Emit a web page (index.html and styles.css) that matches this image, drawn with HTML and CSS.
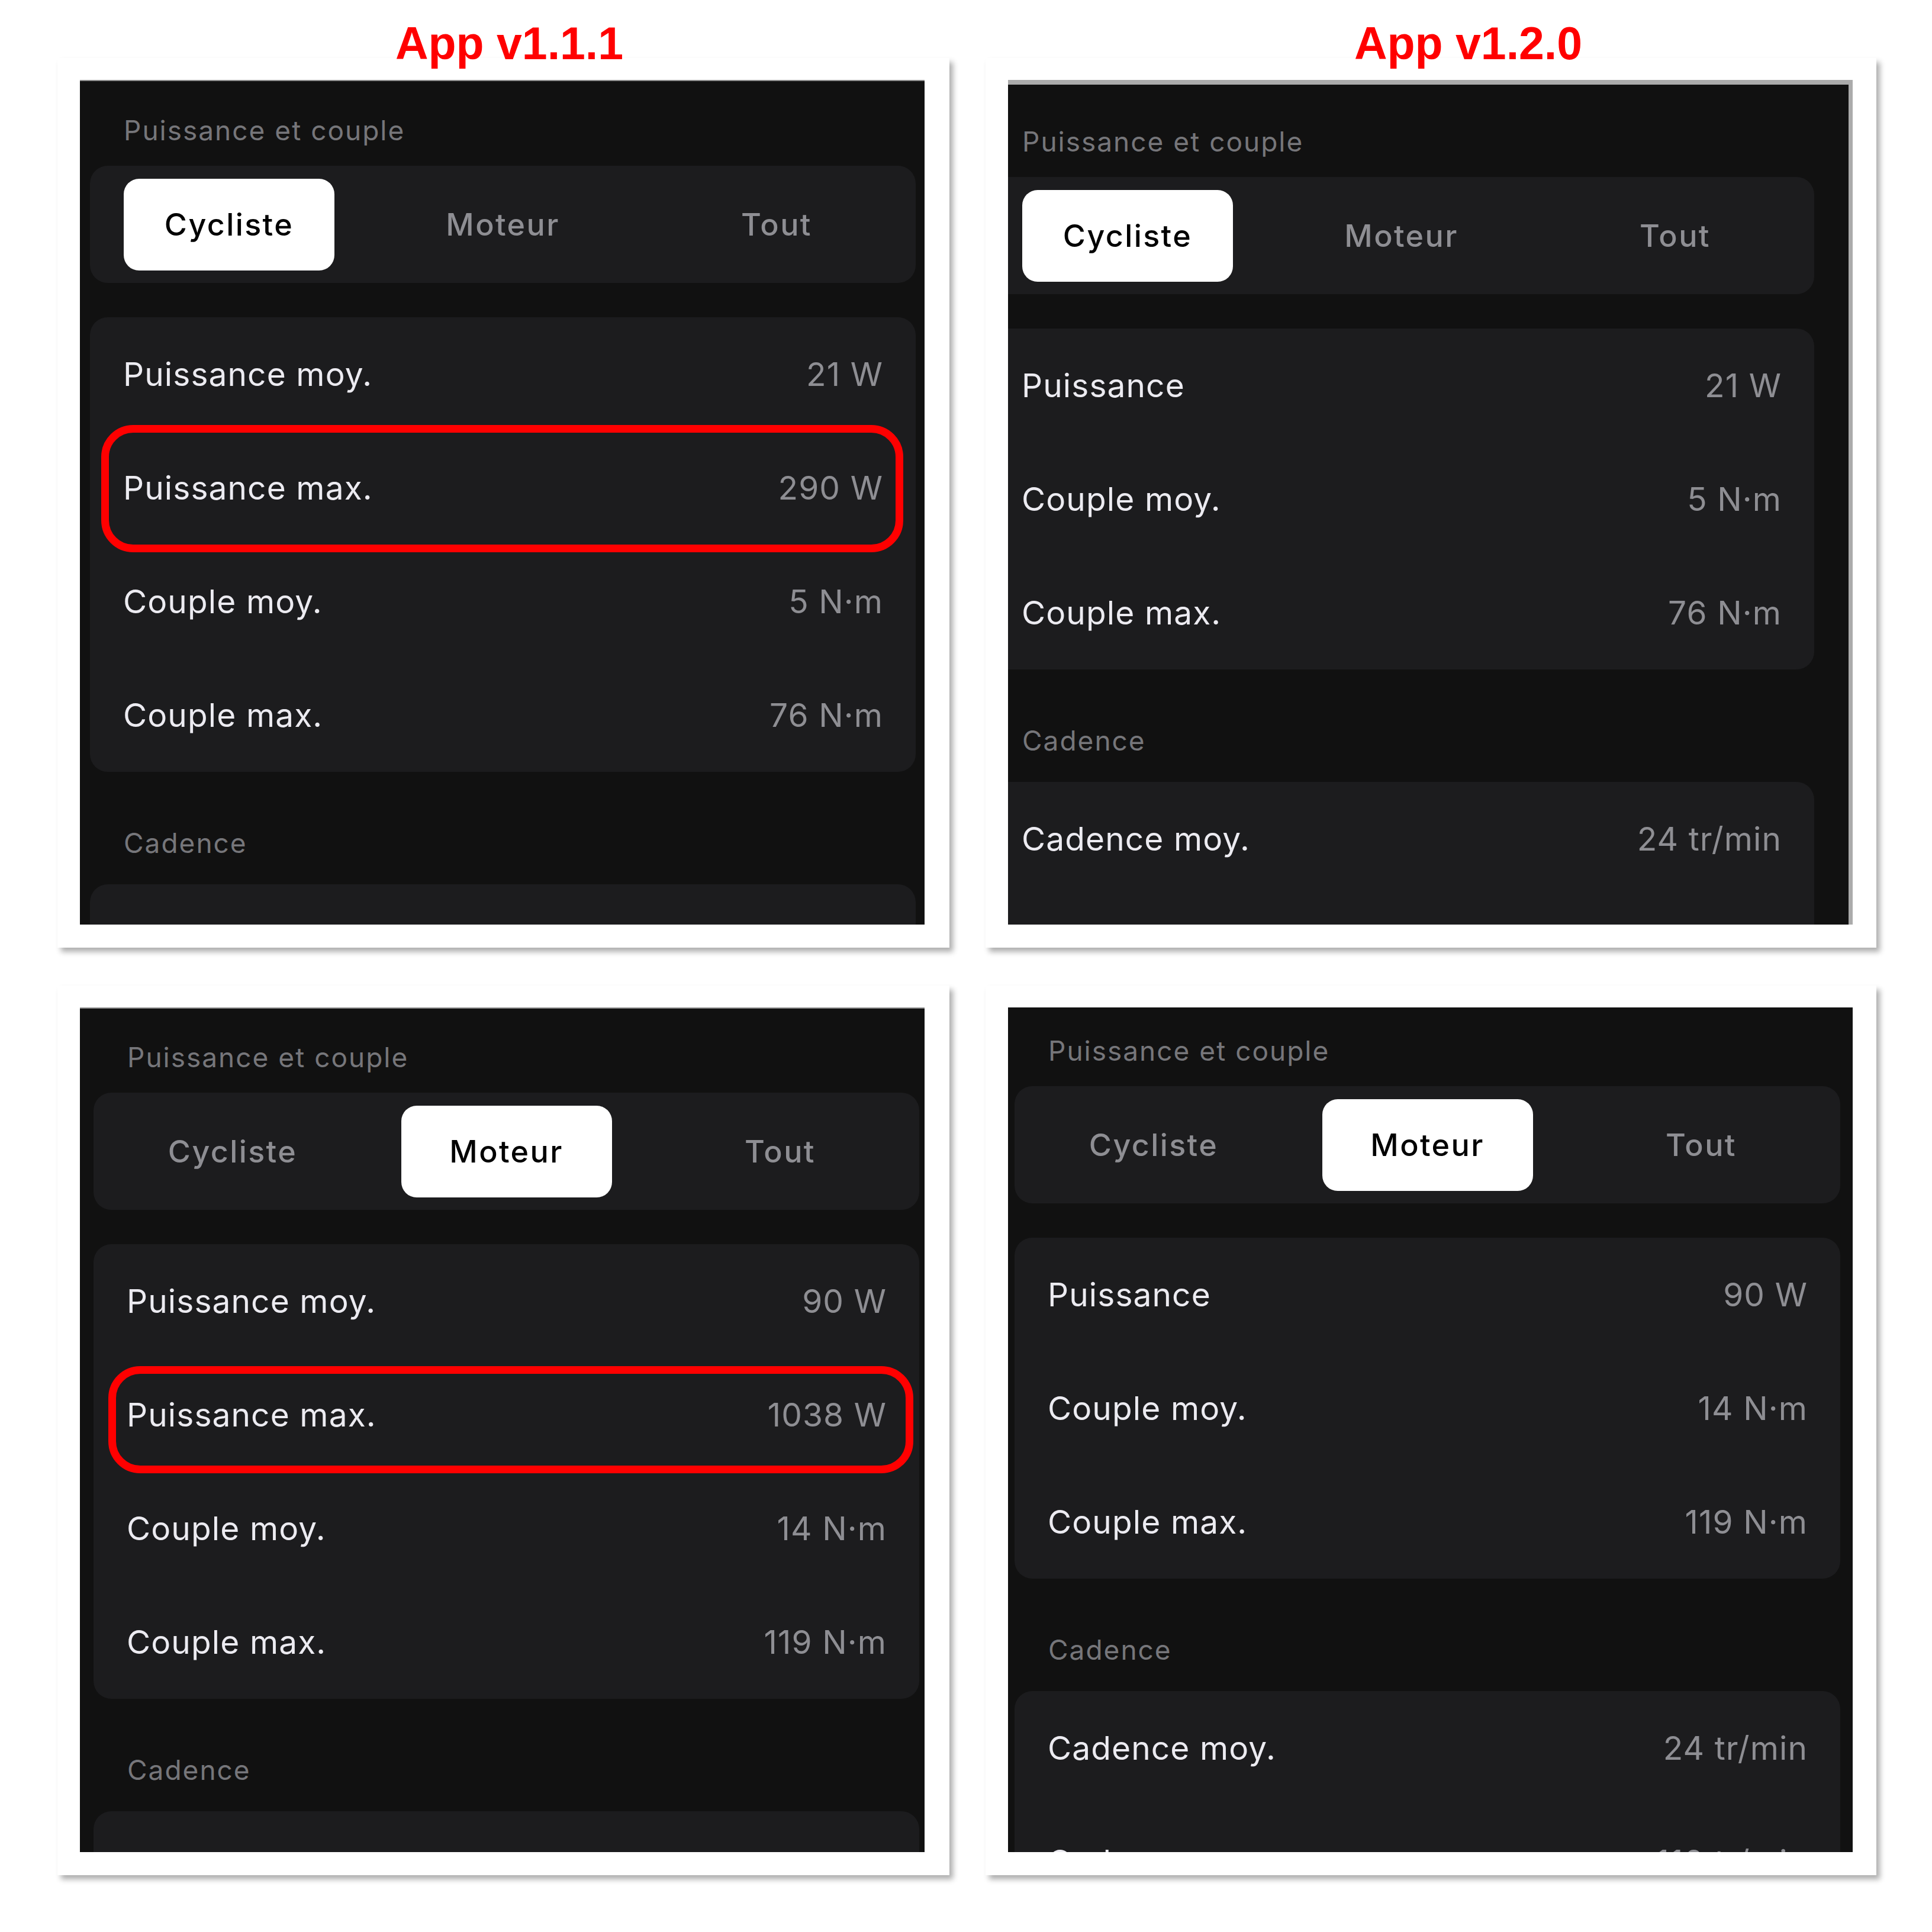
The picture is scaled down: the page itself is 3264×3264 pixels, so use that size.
FILE: index.html
```html
<!DOCTYPE html>
<html lang="fr">
<head>
<meta charset="utf-8">
<title>Comparaison App v1.1.1 / v1.2.0</title>
<link rel="stylesheet" href="styles.css">
</head>
<body>
<div class="page">
  <div class="titles">
    <h1 class="title title--left">App v1.1.1</h1>
    <h1 class="title title--right">App v1.2.0</h1>
  </div>
  <div class="grid">
    <!-- Top left: v1.1.1 Cycliste -->
    <div class="card">
      <div class="screen screen--line">
        <div class="content content--tl">
          <div class="section-title">Puissance et couple</div>
          <div class="seg">
            <div class="seg-item is-active">Cycliste</div>
            <div class="seg-item">Moteur</div>
            <div class="seg-item">Tout</div>
          </div>
          <div class="list">
            <div class="row"><span class="label">Puissance moy.</span><span class="value">21 W</span></div>
            <div class="row is-flagged"><span class="label">Puissance max.</span><span class="value">290 W</span></div>
            <div class="row"><span class="label">Couple moy.</span><span class="value">5 N·m</span></div>
            <div class="row"><span class="label">Couple max.</span><span class="value">76 N·m</span></div>
          </div>
          <div class="section-title section-title--next">Cadence</div>
          <div class="list list--stub"></div>
        </div>
      </div>
    </div>
    <!-- Top right: v1.2.0 Cycliste -->
    <div class="card">
      <div class="screen screen--framed">
        <div class="content content--tr">
          <div class="section-title">Puissance et couple</div>
          <div class="seg">
            <div class="seg-item is-active">Cycliste</div>
            <div class="seg-item">Moteur</div>
            <div class="seg-item">Tout</div>
          </div>
          <div class="list">
            <div class="row"><span class="label">Puissance</span><span class="value">21 W</span></div>
            <div class="row"><span class="label">Couple moy.</span><span class="value">5 N·m</span></div>
            <div class="row"><span class="label">Couple max.</span><span class="value">76 N·m</span></div>
          </div>
          <div class="section-title section-title--next">Cadence</div>
          <div class="list list--open">
            <div class="row"><span class="label">Cadence moy.</span><span class="value">24 tr/min</span></div>
          </div>
        </div>
      </div>
    </div>
    <!-- Bottom left: v1.1.1 Moteur -->
    <div class="card">
      <div class="screen screen--line">
        <div class="content content--bl">
          <div class="section-title">Puissance et couple</div>
          <div class="seg">
            <div class="seg-item">Cycliste</div>
            <div class="seg-item is-active">Moteur</div>
            <div class="seg-item">Tout</div>
          </div>
          <div class="list">
            <div class="row"><span class="label">Puissance moy.</span><span class="value">90 W</span></div>
            <div class="row is-flagged is-flagged--alt"><span class="label">Puissance max.</span><span class="value">1038 W</span></div>
            <div class="row"><span class="label">Couple moy.</span><span class="value">14 N·m</span></div>
            <div class="row"><span class="label">Couple max.</span><span class="value">119 N·m</span></div>
          </div>
          <div class="section-title section-title--next">Cadence</div>
          <div class="list list--stub"></div>
        </div>
      </div>
    </div>
    <!-- Bottom right: v1.2.0 Moteur -->
    <div class="card">
      <div class="screen">
        <div class="content content--br">
          <div class="section-title">Puissance et couple</div>
          <div class="seg">
            <div class="seg-item">Cycliste</div>
            <div class="seg-item is-active">Moteur</div>
            <div class="seg-item">Tout</div>
          </div>
          <div class="list">
            <div class="row"><span class="label">Puissance</span><span class="value">90 W</span></div>
            <div class="row"><span class="label">Couple moy.</span><span class="value">14 N·m</span></div>
            <div class="row"><span class="label">Couple max.</span><span class="value">119 N·m</span></div>
          </div>
          <div class="section-title section-title--next">Cadence</div>
          <div class="list">
            <div class="row"><span class="label">Cadence moy.</span><span class="value">24 tr/min</span></div>
            <div class="row"><span class="label">Cadence max.</span><span class="value">110 tr/min</span></div>
          </div>
        </div>
      </div>
    </div>
  </div>
</div>
</body>
</html>
```
FILE: styles.css
```css
* {
  box-sizing: border-box;
}

html, body {
  margin: 0;
  padding: 0;
  background: #ffffff;
}

body {
  font-family: Inter, "Noto Sans", "DejaVu Sans", sans-serif;
}

.page {
  width: 3264px;
  height: 3264px;
  padding: 48px 0 0 97px;
  overflow: hidden;
}

.titles,
.grid {
  display: grid;
  grid-template-columns: 1507px 1505px;
  column-gap: 61px;
}

.titles {
  position: relative;
  z-index: 1;
}

.grid {
  row-gap: 64px;
}

.title {
  margin: 0;
  height: 50px;
  line-height: 50px;
  text-align: center;
  font-family: "Liberation Sans", Arial, sans-serif;
  font-weight: 700;
  font-size: 77px;
  color: #ff0000;
  white-space: nowrap;
}

.title--left {
  padding-left: 20px;
}

.title--right {
  padding-left: 126px;
}

.card {
  background: #ffffff;
  padding: 37px 42px 39px 38px;
  box-shadow: 6px 7px 9px rgba(0, 0, 0, 0.32);
}

.screen {
  width: 1427px;
  height: 1427px;
  background: #111111;
  overflow: hidden;
}

.screen--line {
  box-shadow: inset 0 2px 0 #8e8e8e;
}

.screen--framed {
  border-top: 8px solid #ababab;
  border-right: 7px solid #ababab;
}

.content {
  width: 1395px;
  margin-left: 17px;
  padding-top: 55px;
}

.content--tr {
  margin-left: -33px;
  padding-top: 66px;
}

.content--bl {
  margin-left: 23px;
  padding-top: 54px;
}

.content--br {
  margin-left: 11px;
  padding-top: 43px;
}

.section-title {
  height: 60px;
  display: flex;
  align-items: center;
  padding-left: 57px;
  margin-bottom: 30px;
  font-size: 46px;
  letter-spacing: 2px;
  color: #76767a;
}

.section-title--next {
  margin-top: 90px;
  margin-bottom: 40px;
}

.seg {
  height: 198px;
  padding: 22px 57px 21px;
  background: #1c1c1e;
  border-radius: 30px;
  display: flex;
  justify-content: space-between;
}

.seg-item {
  width: 356px;
  display: flex;
  align-items: center;
  justify-content: center;
  border-radius: 26px;
  font-size: 52px;
  font-weight: 500;
  letter-spacing: 2.4px;
  color: #8e8e93;
}

.seg-item.is-active {
  background: #ffffff;
  color: #000000;
}

.list {
  margin-top: 58px;
  background: #1c1c1e;
  border-radius: 30px;
}

.section-title + .list {
  margin-top: 0;
}

.list--stub {
  height: 192px;
}

.list--open {
  padding-bottom: 192px;
}

.row {
  position: relative;
  height: 192px;
  display: flex;
  align-items: center;
  justify-content: space-between;
  padding: 0 55px 0 56px;
  font-size: 55px;
  letter-spacing: 1.1px;
}

.label {
  color: #ecebf1;
}

.value {
  color: #8e8e93;
}

.is-flagged::after {
  content: "";
  position: absolute;
  top: -10px;
  bottom: -13px;
  left: 19px;
  right: 21px;
  border: 13px solid #ff0000;
  border-radius: 54px;
  pointer-events: none;
}

.is-flagged--alt::after {
  top: 14px;
  bottom: -3px;
  left: 25px;
  right: 10px;
}
```
